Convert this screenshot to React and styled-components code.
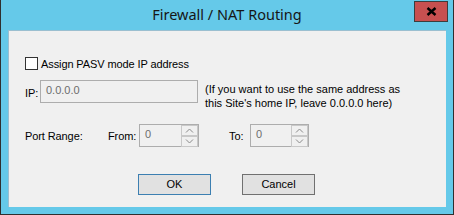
import React from 'react';
import styled, { createGlobalStyle } from 'styled-components';

const GlobalStyle = createGlobalStyle`
  html, body {
    margin: 0;
    padding: 0;
    background: #65c9e9;
  }
  * {
    box-sizing: border-box;
  }
`;

const Window = styled.div`
  position: relative;
  width: 454px;
  height: 215px;
  background: #65c9e9;
  border: 1px solid #2f2f2f;
  border-top: none;
  display: flex;
  flex-direction: column;
  padding: 0 7px 7px 7px;
  font-family: 'Liberation Sans', Arial, sans-serif;
  font-size: 11px;
  color: #000;
`;

const TitleBar = styled.div`
  height: 30px;
  display: flex;
  align-items: center;
  justify-content: center;
  font-family: 'Noto Sans', 'Open Sans', sans-serif;
  font-size: 14.5px;
  color: #161616;
  padding-bottom: 2px;
`;

const CloseButton = styled.div`
  position: absolute;
  top: 1px;
  right: 5px;
  width: 34px;
  height: 21px;
  background: #c75050;
  border: 1px solid #3d3d3d;
  display: flex;
  align-items: center;
  justify-content: center;
`;

const Client = styled.div`
  flex: 1;
  background: #f0f0f0;
  border-top: 1px solid #9bbfd0;
  border-left: 1px solid #9bbfd0;
  padding: 26px 16px 0 16px;
  display: flex;
  flex-direction: column;
`;

const CheckRow = styled.label`
  display: flex;
  align-items: center;
  gap: 3px;
  height: 13px;
`;

const Box = styled.span`
  width: 13px;
  height: 13px;
  background: #fff;
  border: 1px solid #333;
`;

const IpRow = styled.div`
  display: flex;
  align-items: flex-start;
  margin-top: 10px;
`;

const Label = styled.span`
  width: ${(p) => p.$w || 'auto'};
  margin-left: ${(p) => p.$gap || '0'};
  margin-top: ${(p) => p.$top || '0'};
  flex-shrink: 0;
  letter-spacing: -0.1px;
`;

const TextBox = styled.div`
  width: ${(p) => p.$w};
  height: 23px;
  border: 1px solid #adadad;
  background: #f0f0f0;
  color: #6d6d6d;
  padding: 3px 0 0 5px;
  display: flex;
  justify-content: space-between;
  align-items: flex-start;
`;

const Note = styled.div`
  margin: 2px 0 0 7px;
  line-height: 14px;
`;

const PortRow = styled.div`
  display: flex;
  align-items: center;
  margin-top: 14px;
`;

const Spin = styled.div`
  display: flex;
  flex-direction: column;
  margin-top: -3px;
`;

const SpinButton = styled.div`
  width: 17px;
  height: 11px;
  border: 1px solid #c8c8c8;
  background: #f0f0f0;
  display: flex;
  align-items: center;
  justify-content: center;
`;

const ButtonRow = styled.div`
  display: flex;
  gap: 31px;
  margin: 27px 0 0 113px;
`;

const Button = styled.div`
  width: 73px;
  height: 21px;
  background: #e1e1e1;
  border: 1px solid ${(p) => (p.$default ? '#3c7fb1' : '#707070')};
  display: flex;
  align-items: center;
  justify-content: center;
  padding-bottom: 1px;
`;

const Arrow = ({ up }) => (
  <svg width="9" height="5" viewBox="0 0 9 5">
    <path
      d={up ? 'M1 4.5 L4.5 1 L8 4.5' : 'M1 0.5 L4.5 4 L8 0.5'}
      fill="none"
      stroke="#8a8a8a"
      strokeWidth="1"
    />
  </svg>
);

const SpinBox = ({ w }) => (
  <TextBox $w={w}>
    <span>0</span>
    <Spin>
      <SpinButton>
        <Arrow up />
      </SpinButton>
      <SpinButton>
        <Arrow />
      </SpinButton>
    </Spin>
  </TextBox>
);

export default function App() {
  return (
    <>
      <GlobalStyle />
      <Window>
        <TitleBar>Firewall / NAT Routing</TitleBar>
        <CloseButton>
          <svg width="11" height="9" viewBox="0 0 11 9">
            <path d="M1.5 1 L9.5 8 M9.5 1 L1.5 8" stroke="#000" strokeWidth="2.4" />
          </svg>
        </CloseButton>
        <Client>
          <CheckRow>
            <Box />
            <Label>Assign PASV mode IP address</Label>
          </CheckRow>
          <IpRow>
            <Label $w="15px" $top="7px">IP:</Label>
            <TextBox $w="158px">0.0.0.0</TextBox>
            <Note>
              (If you want to use the same address as
              <br />
              this Site's home IP, leave 0.0.0.0 here)
            </Note>
          </IpRow>
          <PortRow>
            <Label $w="83px">Port Range:</Label>
            <Label $w="31px">From:</Label>
            <SpinBox w="60px" />
            <Label $w="21px" $gap="30px">To:</Label>
            <SpinBox w="59px" />
          </PortRow>
          <ButtonRow>
            <Button $default>OK</Button>
            <Button>Cancel</Button>
          </ButtonRow>
        </Client>
      </Window>
    </>
  );
}
